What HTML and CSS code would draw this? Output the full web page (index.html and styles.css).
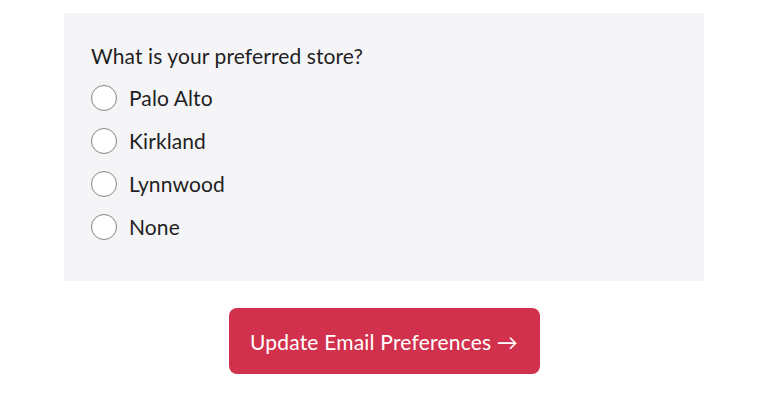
FILE: index.html
```html
<!DOCTYPE html>
<html lang="en">
<head>
  <meta charset="UTF-8" />
  <title>Email Preferences</title>
  <link rel="stylesheet" href="styles.css">
</head>
<body>
  <form class="prefs">
    <fieldset class="panel">
      <p class="question">What is your preferred store?</p>
      <label class="option"><input type="radio" name="store" value="palo-alto" /><span>Palo Alto</span></label>
      <label class="option"><input type="radio" name="store" value="kirkland" /><span>Kirkland</span></label>
      <label class="option"><input type="radio" name="store" value="lynnwood" /><span>Lynnwood</span></label>
      <label class="option"><input type="radio" name="store" value="none" /><span>None</span></label>
    </fieldset>
    <button type="submit" class="btn">Update Email Preferences →</button>
  </form>
</body>
</html>
```

FILE: styles.css
```css
body {
  margin: 0;
  font-family: Lato, "Open Sans", sans-serif;
  color: #1f1f24;
  background-color: #fff;
}

.prefs {
  display: flex;
  flex-direction: column;
  align-items: center;
  padding-top: 13px;
}

.panel {
  box-sizing: border-box;
  width: 640px;
  margin: 0;
  border: none;
  background-color: #f5f5f7;
  padding: 31px 27px 33px;
  display: flex;
  flex-direction: column;
}

.question {
  margin: 0 0 8px;
  font-size: 21px;
  line-height: 24px;
  letter-spacing: 0.1px;
}

.option {
  display: flex;
  align-items: center;
  gap: 12px;
  height: 43px;
  font-size: 21px;
  letter-spacing: 0.1px;
  cursor: pointer;
}

.option input {
  appearance: none;
  margin: 0;
  width: 26px;
  height: 26px;
  border: 1.5px solid #858585;
  border-radius: 50%;
  background: #fff;
}

.option input:checked {
  background: radial-gradient(#d2314d 45%, #fff 50%);
}

.btn {
  margin-top: 27px;
  width: 311px;
  height: 66px;
  border: none;
  border-radius: 8px;
  background-color: #d2314d;
  color: #fff;
  font-family: inherit;
  font-size: 21px;
  letter-spacing: 0.2px;
  cursor: pointer;
}
```
